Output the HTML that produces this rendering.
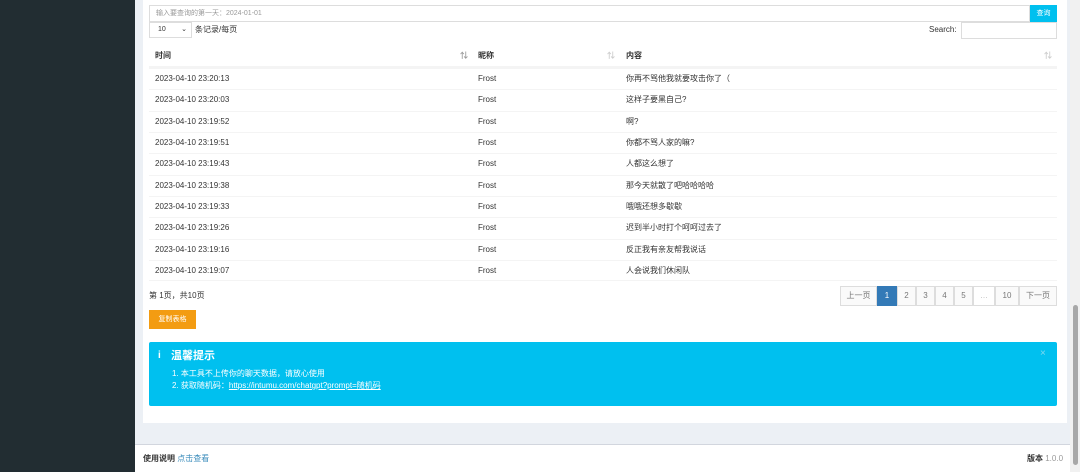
<!DOCTYPE html>
<html><head><meta charset="utf-8"><style>
*{box-sizing:border-box;margin:0;padding:0}
body{width:1080px;height:472px;overflow:hidden;background:#ecf0f5;font-family:"Liberation Sans","Noto Sans CJK SC",sans-serif;font-size:8px;color:#333;position:relative}
.abs{position:absolute}
.side{left:0;top:0;width:135px;height:472px;background:#222d32}
.box{left:143px;top:0;width:924px;height:423px;background:#fff}
.foot{left:135px;top:444px;width:935px;height:28px;background:#fff;border-top:1px solid #d2d6de}
.sb{left:1070px;top:0;width:10px;height:472px;background:#f1f1f1}
.thumb{left:1073px;top:305px;width:5px;height:160px;background:#a8a8a8;border-radius:3px}
.row{left:149px;width:908px;height:21px;border-top:1px solid #f4f4f4}
.row span{position:absolute;top:0;line-height:20px;height:20px}
.c1{left:6px}.c2{left:329px}.c3{left:477px}
.pg{top:286px;height:20px;border:1px solid #ddd;text-align:center;line-height:18px;color:#777;background:#fafafa}
</style></head><body>
<div class="abs side"></div>
<div class="abs box"></div>
<div class="abs" style="left:149px;top:5px;width:881px;height:17px;border:1px solid #ddd;padding:0 6px;line-height:15px;color:#999;font-size:7px">输入要查询的第一天：2024-01-01</div>
<div class="abs" style="left:1030px;top:5px;width:27px;height:17px;background:#00c0ef;color:#fff;font-size:7px;text-align:center;line-height:17px">查询</div>
<div class="abs" style="left:149px;top:22px;width:43px;height:16px;border:1px solid #ddd;padding:0 8px;line-height:14px;font-size:7px">10<span style="position:absolute;right:4px">⌄</span></div>
<div class="abs" style="left:195px;top:22px;line-height:16px">条记录/每页</div>
<div class="abs" style="left:929px;top:22px;line-height:16px">Search:</div>
<div class="abs" style="left:961px;top:22px;width:96px;height:17px;border:1px solid #ddd"></div>
<div class="abs row" style="top:46px;height:22px;border:none;border-bottom:2px solid #f4f4f4;font-weight:bold"><span class="c1">时间</span><span style="left:311px;color:#999">⇅</span><span class="c2">昵称</span><span style="left:458px;color:#ccc">⇅</span><span class="c3">内容</span><span style="left:895px;color:#ccc">⇅</span></div>
<div class="abs row" style="top:68px"><span class="c1">2023-04-10 23:20:13</span><span class="c2">Frost</span><span class="c3">你再不骂他我就要攻击你了（</span></div>
<div class="abs row" style="top:89px"><span class="c1">2023-04-10 23:20:03</span><span class="c2">Frost</span><span class="c3">这样子要黑自己?</span></div>
<div class="abs row" style="top:111px"><span class="c1">2023-04-10 23:19:52</span><span class="c2">Frost</span><span class="c3">啊?</span></div>
<div class="abs row" style="top:132px"><span class="c1">2023-04-10 23:19:51</span><span class="c2">Frost</span><span class="c3">你都不骂人家的嘛?</span></div>
<div class="abs row" style="top:153px"><span class="c1">2023-04-10 23:19:43</span><span class="c2">Frost</span><span class="c3">人都这么想了</span></div>
<div class="abs row" style="top:175px"><span class="c1">2023-04-10 23:19:38</span><span class="c2">Frost</span><span class="c3">那今天就散了吧哈哈哈哈</span></div>
<div class="abs row" style="top:196px"><span class="c1">2023-04-10 23:19:33</span><span class="c2">Frost</span><span class="c3">哦哦还想多歇歇</span></div>
<div class="abs row" style="top:217px"><span class="c1">2023-04-10 23:19:26</span><span class="c2">Frost</span><span class="c3">迟到半小时打个呵呵过去了</span></div>
<div class="abs row" style="top:239px"><span class="c1">2023-04-10 23:19:16</span><span class="c2">Frost</span><span class="c3">反正我有亲友帮我说话</span></div>
<div class="abs row" style="top:260px;border-bottom:1px solid #f4f4f4"><span class="c1">2023-04-10 23:19:07</span><span class="c2">Frost</span><span class="c3">人会说我们休闲队</span></div>
<div class="abs" style="left:149px;top:288px;line-height:16px">第 1页，共10页</div>
<div class="abs pg" style="left:840px;width:37px">上一页</div>
<div class="abs pg" style="left:877px;width:20px;background:#337ab7;border-color:#337ab7;color:#fff">1</div>
<div class="abs pg" style="left:897px;width:19px">2</div>
<div class="abs pg" style="left:916px;width:19px">3</div>
<div class="abs pg" style="left:935px;width:19px">4</div>
<div class="abs pg" style="left:954px;width:19px">5</div>
<div class="abs pg" style="left:973px;width:22px;background:#fff;color:#bbb">…</div>
<div class="abs pg" style="left:995px;width:24px">10</div>
<div class="abs pg" style="left:1019px;width:38px">下一页</div>
<div class="abs" style="left:149px;top:310px;width:47px;height:19px;background:#f39c12;color:#fff;text-align:center;line-height:19px;font-size:7px">复制表格</div>
<div class="abs" style="left:149px;top:342px;width:908px;height:64px;background:#00c0ef;border-radius:2px;color:#fff">
<div class="abs" style="left:9px;top:7px;font-weight:bold;font-size:10px;line-height:14px">i</div>
<div class="abs" style="left:22px;top:7px;font-weight:bold;font-size:11px;line-height:14px">温馨提示</div>
<div class="abs" style="left:23px;top:26px;line-height:12px">1. 本工具不上传你的聊天数据，请放心使用</div>
<div class="abs" style="left:23px;top:38px;line-height:12px">2. 获取随机码：<u>https://intumu.com/chatgpt?prompt=随机码</u></div>
<div class="abs" style="left:891px;top:6px;color:#7fd8ef;font-size:10px">×</div>
</div>
<div class="abs foot"><span class="abs" style="left:8px;top:6px;line-height:16px;font-weight:bold">使用说明 <span style="color:#3c8dbc;font-weight:normal">点击查看</span></span><span class="abs" style="left:892px;top:6px;line-height:16px;font-weight:bold">版本 <span style="color:#999;font-weight:normal">1.0.0</span></span></div>
<div class="abs sb"></div><div class="abs thumb"></div>
</body></html>
